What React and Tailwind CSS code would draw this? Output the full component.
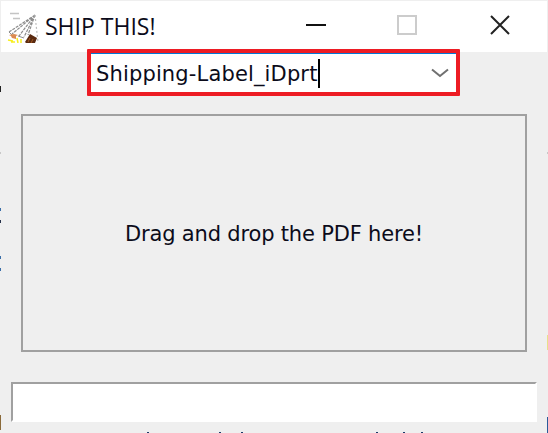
import React from "react";

const font = "font-['DejaVu_Sans','Liberation_Sans',sans-serif]";

function PlaneIcon() {
  return (
    <svg width="32" height="32" viewBox="0 0 32 32" className="shrink-0">
      <path d="M3 2.5h9M6 7.5h7" fill="none" stroke="#c4c4c4" strokeWidth="1.5" />
      <g fill="none" stroke="#8c8c8c" strokeWidth="1.2" strokeDasharray="3 1">
        <path d="M28 4L2 21M28 4L5 23M28 4L12 25M28 4L17 26M28 4L21 24" />
      </g>
      <path d="M28 4l3 27" fill="none" stroke="#bdbdbd" strokeWidth="1.2" strokeDasharray="2 2" />
      <path d="M2 21l3 3M11 25l6 2" fill="none" stroke="#8c8c8c" strokeWidth="1" />
      <path d="M1 29l5 1M4 31h4M10 27l1 5M14 28l0 4" fill="none" stroke="#f7ee20" strokeWidth="1.5" />
      <path d="M2 24l5-1 4 1-2 1 0 3-4-1-1-2z" fill="#dc8b50" />
      <path d="M18 31l5-8 7 4-2 5h-9z" fill="#5a2a10" />
      <path d="M23 27l-2 4M26 28l-2 4" stroke="#a55a22" strokeWidth="1" />
    </svg>
  );
}

export default function App() {
  return (
    <div className={`${font} relative h-[433px] w-[548px] overflow-hidden bg-[#efefef] text-[#0b0b1a] flex flex-col`}>
      <div className="mt-px mx-px h-[51px] bg-white flex items-center pl-[6px]">
        <PlaneIcon />
        <span className="ml-[6px] text-[23px] font-['Open_Sans',sans-serif] leading-none">SHIP THIS!</span>
        <div className="ml-auto -mt-[4px] flex items-center mr-[37px]">
          <div className="w-5 h-[2px] bg-[#111]" />
          <div className="ml-[71px] w-5 h-5 border-2 border-[#cccccc]" />
          <svg width="20" height="20" viewBox="0 0 20 20" className="ml-[73px]">
            <path d="M1 1l18 18M19 1L1 19" stroke="#222" strokeWidth="2" fill="none" />
          </svg>
        </div>
      </div>

      <div className="relative -mt-[3px] ml-[87px] w-[373px] h-[47px] border-[4px] border-[#ed1c24] rounded-[1px]">
        <div className="h-full bg-white border-t border-t-[#0078d7] flex items-center pl-[5px] pr-[7px]">
          <span className="mt-[3px] text-[21px] leading-none tracking-[0.15px]">Shipping-Label_iDprt</span>
          <span className="w-[2px] h-[29px] bg-black" />
          <svg width="18" height="11" viewBox="0 0 18 11" className="ml-auto">
            <path d="M1 1.5l8 6.5 8-6.5" stroke="#707070" strokeWidth="2" fill="none" />
          </svg>
        </div>
      </div>

      <div className="mt-[18px] ml-[21px] w-[506px] h-[238px] border-2 border-[#a0a0a0] flex items-center justify-center">
        <span className="mt-[2px] text-[21px] leading-none tracking-[-0.18px]">Drag and drop the PDF here!</span>
      </div>

      <div className="mt-[30px] ml-[11px] w-[526px] h-[40px] bg-white border-2 border-t-[#a0a0a0] border-l-[#a0a0a0] border-r-white border-b-white" />

      {/* tops of the clipped line below the field */}
      <div className="mt-[10px] ml-[147px] h-px flex">
        <div className="w-[2px] bg-[#1a3a6a]" />
        <div className="ml-[70px] w-[2px] bg-[#1a3a6a]" />
        <div className="ml-[20px] w-[2px] bg-[#1a3a6a]" />
        <div className="ml-[133px] w-[2px] bg-[#1a3a6a]" />
        <div className="ml-[25px] w-[2px] bg-[#1a3a6a]" />
        <div className="ml-[16px] w-[2px] bg-[#1a3a6a]" />
      </div>

      {/* text remnants cut off by the window edges */}
      <div className="absolute left-0 top-[86px] w-px h-[6px] bg-[#222]" />
      <div className="absolute left-0 top-[152px] w-px h-[2px] bg-[#c8c8c8]" />
      <div className="absolute left-0 top-[208px] w-px h-[3px] bg-[#3a6ea8]" />
      <div className="absolute left-0 top-[220px] w-px h-[3px] bg-[#26314a]" />
      <div className="absolute left-0 top-[256px] w-px h-[3px] bg-[#3a6ea8]" />
      <div className="absolute left-0 top-[268px] w-px h-[3px] bg-[#3a6ea8]" />
      <div className="absolute left-0 top-[415px] w-px h-[15px] bg-[#8a6a3a]" />
      <div className="absolute right-0 top-[152px] w-px h-[2px] bg-[#c8c8c8]" />
      <div className="absolute right-0 top-[335px] w-px h-[15px] bg-[#e8e08a]" />
      <div className="absolute right-0 top-[417px] w-px h-[16px] bg-[#2a5a9a]" />
    </div>
  );
}
